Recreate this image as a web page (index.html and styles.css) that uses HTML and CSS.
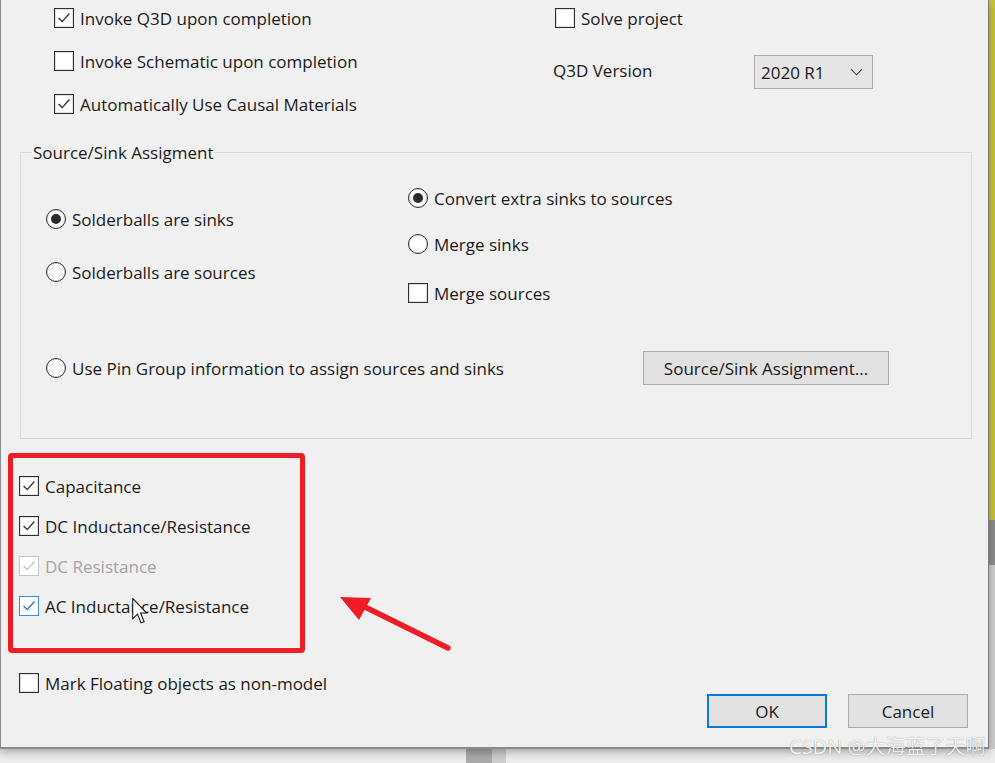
FILE: index.html
```html
<!DOCTYPE html>
<html lang="en">

<head>
    <meta charset="UTF-8">
    <title>Q3D Export Options</title>
    <link rel="stylesheet" href="styles.css">
</head>

<body>
    <div class="screen">
        <!-- dialog -->
        <div class="dialog">
            <div class="top">
                <div class="col">
                    <label class="opt"><span class="box checked"><svg viewBox="0 0 20 20"><path d="M4 10 L8 14 L16 5"/></svg></span>Invoke Q3D upon completion</label>
                    <label class="opt"><span class="box"></span>Invoke Schematic upon completion</label>
                    <label class="opt"><span class="box checked"><svg viewBox="0 0 20 20"><path d="M4 10 L8 14 L16 5"/></svg></span>Automatically Use Causal Materials</label>
                </div>
                <div class="col col-right">
                    <label class="opt"><span class="box"></span>Solve project</label>
                    <div class="version">
                        <span class="version-label">Q3D Version</span>
                        <div class="select">
                            <span>2020 R1</span>
                            <svg class="chevron" viewBox="0 0 14 8"><path d="M1 1 L7 7 L13 1"/></svg>
                        </div>
                    </div>
                </div>
            </div>

            <div class="group">
                <span class="group-title">Source/Sink Assigment</span>
                <div class="group-cols">
                    <div class="gcol-left">
                        <label class="opt"><span class="radio on"></span>Solderballs are sinks</label>
                        <label class="opt"><span class="radio"></span>Solderballs are sources</label>
                    </div>
                    <div class="gcol-right">
                        <label class="opt"><span class="radio on"></span>Convert extra sinks to sources</label>
                        <label class="opt merge-sinks"><span class="radio"></span>Merge sinks</label>
                        <label class="opt merge-sources"><span class="box"></span>Merge sources</label>
                    </div>
                </div>
                <div class="group-bottom">
                    <label class="opt"><span class="radio"></span>Use Pin Group information to assign sources and sinks</label>
                    <button class="btn btn-wide">Source/Sink Assignment...</button>
                </div>
            </div>

            <div class="checks">
                <label class="opt"><span class="box checked"><svg viewBox="0 0 20 20"><path d="M4 10 L8 14 L16 5"/></svg></span>Capacitance</label>
                <label class="opt"><span class="box checked"><svg viewBox="0 0 20 20"><path d="M4 10 L8 14 L16 5"/></svg></span>DC Inductance/Resistance</label>
                <label class="opt disabled"><span class="box checked"><svg viewBox="0 0 20 20"><path d="M4 10 L8 14 L16 5"/></svg></span>DC Resistance</label>
                <label class="opt hover"><span class="box checked"><svg viewBox="0 0 20 20"><path d="M4 10 L8 14 L16 5"/></svg></span>AC Inductance/Resistance</label>
            </div>

            <div class="footer">
                <label class="opt"><span class="box"></span>Mark Floating objects as non-model</label>
                <div class="buttons">
                    <button class="btn btn-ok">OK</button>
                    <button class="btn">Cancel</button>
                </div>
            </div>

            <!-- annotation drawn on top of the screenshot -->
            <div class="annot"></div>
            <svg class="arrow" viewBox="0 0 125 70">
                <path d="M113 58 L26 15" />
                <polygon points="5,7 36,8 24,30" />
            </svg>
            <svg class="cursor" viewBox="0 0 15 26">
                <path d="M0.5 0.5 L0.5 20 L5 15.5 L8.5 24 L11.5 22.8 L8 14.5 L14 14.5 Z" />
            </svg>
        </div>
        <div class="side"></div>
    </div>
    <div class="below"></div>
    <div class="watermark">CSDN @大海蓝了天啊</div>
</body>

</html>
```

FILE: styles.css
```css
body {
    margin: 0;
    background-color: #e9e9e9;
    font-family: "Open Sans", "Noto Sans", sans-serif;
    font-size: 17px;
    color: #1b1b1b;
    position: relative;
    overflow: hidden;
}

.screen {
    display: flex;
    height: 749px;
}

.dialog {
    position: relative;
    z-index: 1;
    width: 989px;
    height: 749px;
    box-sizing: border-box;
    padding-top: 7px;
    background-color: #f0f0f0;
    border-left: 1px solid #8c8c8c;
    border-right: 1px solid #7d7d7d;
    border-bottom: 2px solid #8a8a8a;
    box-shadow: 0 3px 8px rgba(0, 0, 0, .3);
}

.side {
    flex: 1;
    background: linear-gradient(#c8c43e 0 520px, #8f8f8f 520px 565px, #cfcfcf 565px);
}

.below {
    height: 14px;
    background: linear-gradient(to right, #ececec 0 466px, #a9a9a9 466px 492px, #cdcdcd 492px 506px, #ececec 506px);
}

/* controls */

.opt {
    display: flex;
    align-items: center;
    gap: 6px;
    height: 22px;
    white-space: nowrap;
}

.box {
    width: 20px;
    height: 20px;
    box-sizing: border-box;
    flex: none;
    background-color: #fff;
    border: 1px solid #2e2e2e;
    box-shadow: inset 0 0 0 1px rgba(0, 0, 0, .12);
}

.box svg {
    display: block;
    width: 18px;
    height: 18px;
}

.box svg path {
    fill: none;
    stroke: #333;
    stroke-width: 1.5;
}

.radio {
    width: 20px;
    height: 20px;
    box-sizing: border-box;
    flex: none;
    border-radius: 50%;
    background-color: #fff;
    border: 1px solid #2e2e2e;
    box-shadow: inset 0 0 0 1px rgba(0, 0, 0, .12);
    display: flex;
    align-items: center;
    justify-content: center;
}

.radio.on::after {
    content: "";
    width: 10px;
    height: 10px;
    border-radius: 50%;
    background-color: #2b2b2b;
}

.disabled {
    color: #a3a3a3;
}

.disabled .box {
    border-color: #c6c6c6;
    box-shadow: none;
}

.disabled .box svg path {
    stroke: #c3c3c3;
}

.hover .box {
    border-color: #3b8fdf;
    box-shadow: none;
}

.hover .box svg path {
    stroke: #2a73cf;
}

.btn {
    width: 120px;
    height: 34px;
    box-sizing: border-box;
    padding: 0;
    background-color: #e1e1e1;
    border: 1px solid #adadad;
    font: inherit;
    color: #1b1b1b;
}

.btn-wide {
    width: 246px;
}

.btn-ok {
    border: 2px solid #0a78d4;
}

/* top area */

.top {
    display: grid;
    grid-template-columns: 499px 1fr;
    padding-left: 53px;
}

.col {
    display: flex;
    flex-direction: column;
    gap: 21px;
}

.col-right .opt {
    margin-left: 2px;
}

.version {
    display: flex;
    align-items: center;
    margin-top: 5px;
}

.version-label {
    width: 201px;
    margin-top: -4px;
}

.select {
    width: 119px;
    height: 34px;
    box-sizing: border-box;
    padding: 0 9px 0 6px;
    display: flex;
    align-items: center;
    justify-content: space-between;
    background-color: #e5e5e5;
    border: 1px solid #acacac;
}

.chevron {
    width: 13px;
    height: 8px;
}

.chevron path {
    fill: none;
    stroke: #444;
    stroke-width: 1.2;
}

/* Source/Sink group */

.group {
    position: relative;
    height: 287px;
    box-sizing: border-box;
    margin: 37px 16px 0 19px;
    padding: 34px 82px 0 25px;
    border: 1px solid #d9d9d9;
}

.group-title {
    position: absolute;
    top: -11px;
    left: 11px;
    padding: 0 1px;
    line-height: 22px;
    background-color: #f0f0f0;
}

.group-cols {
    display: flex;
}

.gcol-left {
    width: 362px;
    margin-top: 21px;
    display: flex;
    flex-direction: column;
    gap: 31px;
}

.gcol-right {
    display: flex;
    flex-direction: column;
}

.merge-sinks {
    margin-top: 24px;
}

.merge-sources {
    margin-top: 27px;
}

.group-bottom {
    display: flex;
    align-items: center;
    justify-content: space-between;
    height: 34px;
    margin-top: 47px;
}

/* lower checks */

.checks {
    display: flex;
    flex-direction: column;
    gap: 18px;
    margin: 36px 0 0 18px;
}

.footer {
    display: flex;
    justify-content: space-between;
    align-items: flex-start;
    margin-top: 55px;
    padding: 0 20px 0 18px;
}

.buttons {
    display: flex;
    gap: 21px;
    margin-top: 22px;
}

/* annotation layer */

.annot {
    position: absolute;
    left: 7px;
    top: 453px;
    width: 297px;
    height: 200px;
    box-sizing: border-box;
    border: 5px solid #ee1c25;
    border-radius: 4px;
}

.arrow {
    position: absolute;
    left: 334px;
    top: 590px;
    width: 125px;
    height: 70px;
}

.arrow path {
    stroke: #ee1c25;
    stroke-width: 5.5;
    stroke-linecap: round;
}

.arrow polygon {
    fill: #ee1c25;
}

.cursor {
    position: absolute;
    left: 131px;
    top: 598px;
    width: 16px;
    height: 27px;
}

.cursor path {
    fill: #fff;
    stroke: #111;
    stroke-width: 1;
}

.watermark {
    position: absolute;
    z-index: 2;
    left: 789px;
    top: 731px;
    font-family: "Noto Sans", "Noto Sans CJK SC", sans-serif;
    font-size: 20px;
    color: rgba(255, 255, 255, .9);
    text-shadow: 0 0 1px rgba(0, 0, 0, .45);
}
```
